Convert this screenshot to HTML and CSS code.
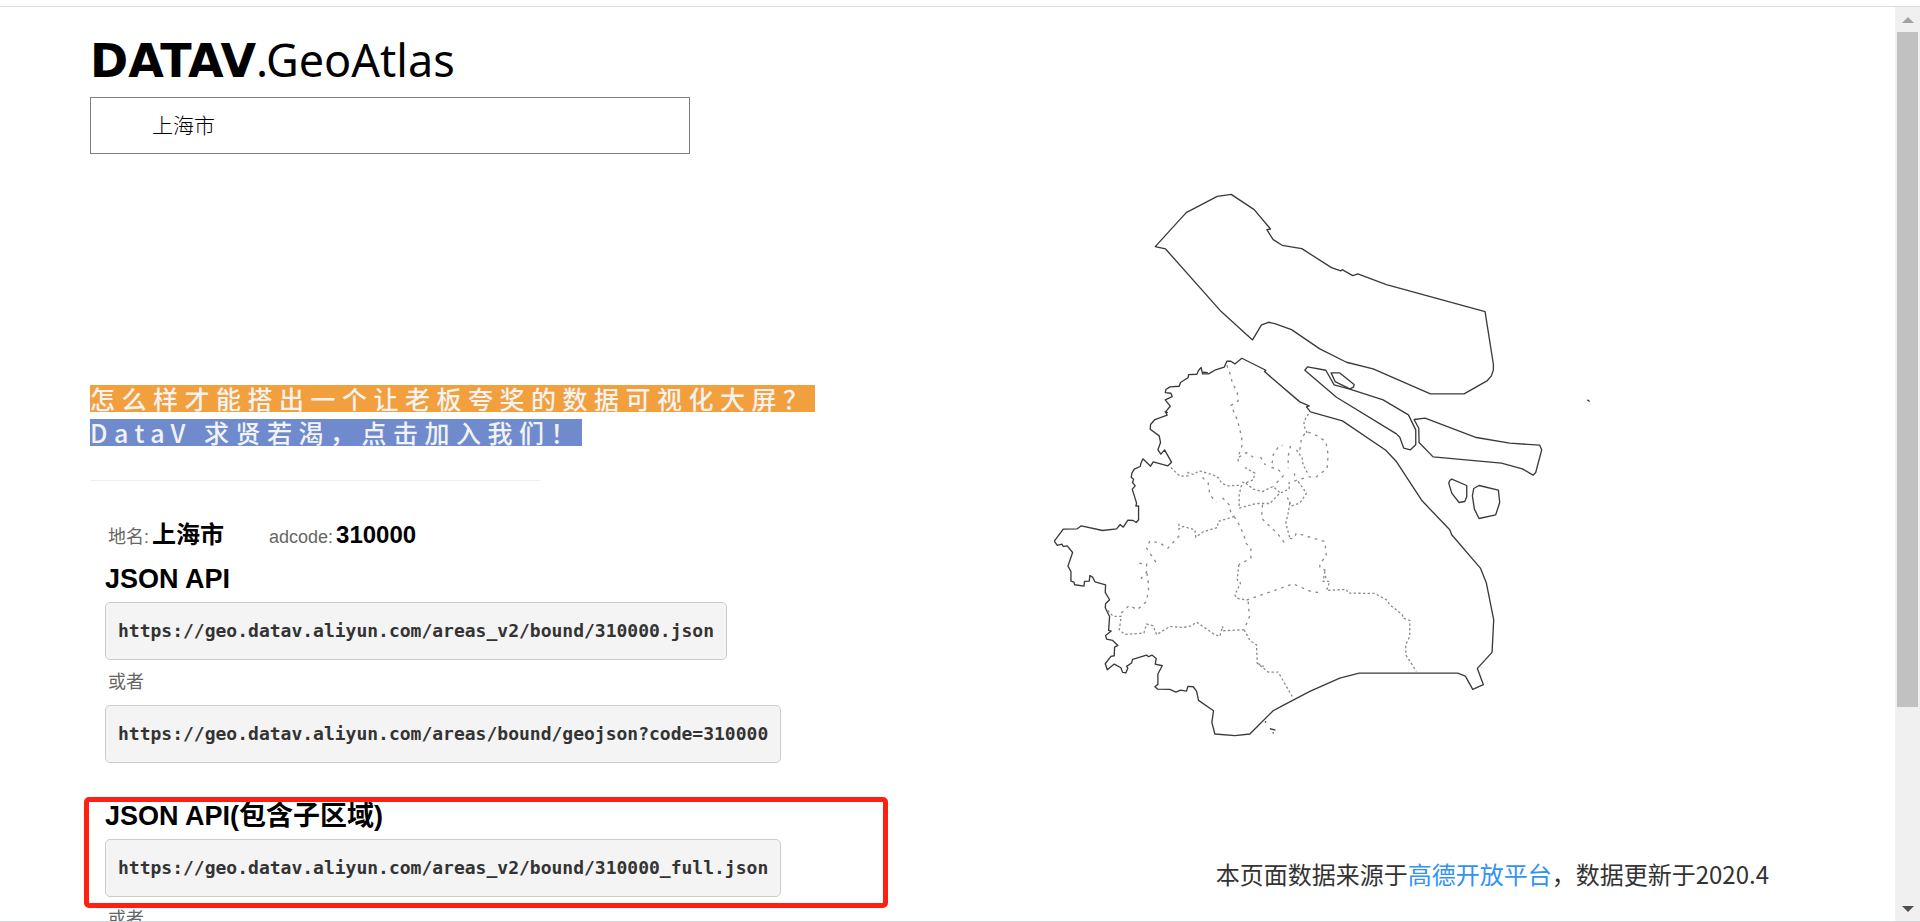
FILE: index.html
```html
<!DOCTYPE html>
<html lang="zh-CN">
<head>
<meta charset="utf-8">
<meta name="viewport" content="width=device-width, initial-scale=1">
<title>DATAV.GeoAtlas</title>
<link rel="stylesheet" href="styles.css">
</head>
<body>
<div class="window">
  <main class="page">
    <section class="panel">
      <h1 class="logo"><span class="logo-strong">DATAV</span><span class="logo-light">.GeoAtlas</span></h1>
      <input class="search" type="text" value="上海市" aria-label="地名">
      <div class="banner">
        <a class="banner-line banner-orange" href="#join">怎么样才能搭出一个让老板夸奖的数据可视化大屏？</a>
        <a class="banner-line banner-blue" href="#join">DataV 求贤若渴，点击加入我们！</a>
      </div>
      <hr class="divider">
      <div class="details">
        <p class="facts">
          <span class="fact">地名: <strong class="fact-value">上海市</strong></span>
          <span class="fact">adcode: <strong class="fact-value">310000</strong></span>
        </p>
        <section class="api">
          <h2 class="api-title">JSON API</h2>
          <pre class="url"><code>https://geo.datav.aliyun.com/areas_v2/bound/310000.json</code></pre>
          <p class="or">或者</p>
          <pre class="url"><code>https://geo.datav.aliyun.com/areas/bound/geojson?code=310000</code></pre>
        </section>
        <section class="api api-full">
          <h2 class="api-title">JSON API(包含子区域)</h2>
          <pre class="url"><code>https://geo.datav.aliyun.com/areas_v2/bound/310000_full.json</code></pre>
          <div class="highlight"></div>
        </section>
        <p class="or">或者</p>
      </div>
    </section>
    <section class="map-side">
      <svg class="map" viewBox="2844 540 2844 1710" role="img" aria-label="上海市">
        <g class="coast">
          <g transform="translate(3360 510)">
            <path d="M106 230L199 128 292 79 334 73 403 119 452 177 441 179 460 209 487 226 546 236 635 293 663 303 667 299 699 317 714 312 800 344 1096 425 1121 583 1121 600 1115 618 1103 632 1033 672 932 672 760 597 680 577 600 537 515 479 465 461 446 457 425 465 398 510 304 425 137 237Z"/>
          </g>
          <g transform="translate(3120 1020)">
            <path d="M43 604L70 568 112 567 124 558 188 572 230 567 241 554 250 562 264 541 280 542 289 548 296 540 296 498 288 499 290 490 277 448 286 438 278 428 281 418 274 412 276 400 283 388 301 380 303 370 309 357 332 379 340 366 384 378 395 367 374 330 363 343 354 330 362 308 358 288 331 268 332 254 345 239 382 226 377 216 391 199 376 180 397 170 393 160 376 158 378 149 390 141 418 139 422 128 445 113 446 104 471 103 476 92 484 83 488 102 506 102 525 91 553 82 561 64 573 64 585 72 606 55 678 91 674 95 780 186 808 198 800 201 812 216"/>
            <path d="M374 215L384 218M489 97L504 98"/>
          </g>
          <g transform="translate(3840 1050)">
            <path d="M92 186L188 213 318 301 349 334 427 453 510 540 516 555 602 655 620 700 642 810 637 908 593 956 611 1005 579 1019 557 979 534 970 238 970 180 985 90 1025 0 1072"/>
            <path d="M83 51L138 61 163 105 210 118 310 150 386 195 408 240 408 285 392 300 372 295 360 262 350 252 170 142 75 61Z"/>
            <path d="M154 69L180 69 223 104 221 112 210 117 166 95Z"/>
            <path d="M403 209L436 205 590 263 690 280 780 286 786 300 768 368 760 376 728 357 665 340 460 321 418 278 417 235Z"/>
            <path d="M516 388L561 407 561 441 555 455 538 458 516 430 507 400 510 392Z"/>
            <path d="M598 407L656 421 660 458 648 495 598 506 584 478 578 438 582 416Z"/>
            <path d="M923 150L930 155"/>
          </g>
          <g transform="translate(3120 1560)">
            <path d="M720 562L700 573 630 643 585 648 525 643 516 608 521 573 476 542 470 514 460 501 444 500 440 514 422 511 408 517 390 509 353 508 345 501 354 494 354 463 367 438 346 433 349 416 336 406 326 411 320 406 278 419 275 430 260 440 264 445 258 459 248 458 243 444 223 433 202 450 196 432 213 410 223 408 224 382 234 377 218 362 200 358 197 347 214 334 206 332 209 290 196 264 197 252 209 240 196 218 197 195 165 186 158 172 150 167 148 184 134 185 132 199 104 195 102 187 93 184 93 155 84 139 98 98 82 78 70 80 66 73 52 77 43 64"/>
            <path d="M675 606L679 608M690 627L707 631M698 640L702 639"/>
          </g>
        </g>
        <g class="district">
          <g transform="translate(3120 1020)">
            <path class="sparse" d="M561 76L573 108 577 130 592 155 595 183 573 197 583 218 594 245 605 290 607 315 595 350 595 375"/>
            <path d="M393 383L420 409 445 408 444 398 460 404 478 393 520 405 537 415 545 430 565 438 605 436"/>
            <path class="sparse" d="M488 413L505 430 510 465 530 487M548 474L568 495 572 515 583 530"/>
            <path d="M583 530L535 545 533 563 490 576 468 592 465 570 430 560 417 568 417 552"/>
            <path class="sparse" d="M418 588L384 625 360 610 330 603 320 625 350 670M298 671L320 672 320 697 303 717"/>
            <path d="M605 436L598 465 598 505 650 491 690 491 720 460 748 448 748 425"/>
            <path d="M615 383L645 400 640 420 615 430 605 425M618 430L640 448 668 455 700 440 720 458"/>
            <path class="sparse" d="M597 352L620 338 640 352M662 352L677 376M697 370L700 345 718 317 728 317M752 318L745 350 745 385M695 383L715 388 730 408 700 440"/>
            <path class="sparse" d="M780 330L785 295 800 275 830 287 858 305 865 345 862 385 830 411 805 411 765 423 764 400"/>
            <path d="M770 330L787 355 790 375 806 405M806 222L792 245 795 265 805 285"/>
            <path d="M775 425L800 460 780 490 755 498 740 468M750 490L745 520 738 550 750 595"/>
            <path class="sparse" d="M668 495L665 535 690 560 712 580 735 610M750 595L760 598 770 580 810 592 855 605 860 650 840 670 840 685 855 690 858 715"/>
            <path class="sparse" d="M583 530L598 555 612 585 618 610 633 625 633 655 597 675"/>
            <path d="M597 675L592 720 602 730 585 765 590 775 620 781"/>
          </g>
          <g transform="translate(3120 1560)">
            <path class="sparse" d="M620 241L690 217 760 192 810 214 845 220M625 245L629 290 613 330"/>
            <path d="M613 330L550 333 548 320 540 350 525 345 470 307 455 318 430 323 390 320 350 345 340 318 320 313 312 340 255 344 238 330 244 290 220 290 202 270"/>
            <path class="sparse" d="M244 280L268 257 292 270 320 245 327 200 320 155"/>
            <path d="M613 330L630 362 650 375 652 430 685 457 715 457 757 530M655 432L672 440"/>
          </g>
          <g transform="translate(3840 1620)">
            <path d="M135 95L130 125 150 125 140 152 200 149 205 160 285 161 320 180 330 195 368 225 370 235 390 242 390 290 378 315 378 345 410 395"/>
          </g>
        </g>
      </svg>
      <p class="source">本页面数据来源于<a class="source-link" href="#amap">高德开放平台</a>，数据更新于2020.4</p>
    </section>
  </main>
  <div class="scrollbar" aria-hidden="true">
    <svg class="arrow arrow-up" viewBox="0 0 12 6"><path d="M6 0L12 6H0Z"/></svg>
    <div class="track"><div class="thumb"></div></div>
    <svg class="arrow" viewBox="0 0 12 6"><path d="M0 0H12L6 6Z"/></svg>
  </div>
</div>
</body>
</html>
```
FILE: styles.css
```css
* {
  box-sizing: border-box;
}

body {
  margin: 0;
  background: #fff;
  color: #000;
  font-family: "Liberation Sans", "Noto Sans CJK SC", sans-serif;
}

h1, h2, p, pre {
  margin: 0;
}

.window {
  display: flex;
  height: 100vh;
  margin-top: 6px;
  max-height: calc(100vh - 6px);
  overflow: hidden;
  border-top: 1px solid #dcdcdc;
  border-bottom: 1px solid #cfd8e2;
}

.page {
  flex: 1;
  min-width: 0;
  display: grid;
  grid-template-columns: 1fr 1fr;
  overflow: hidden;
}

.panel {
  padding: 28px 0 0 90px;
}

.logo {
  display: flex;
  align-items: baseline;
  height: 50px;
  margin-bottom: 12px;
  font-family: "DejaVu Sans", sans-serif;
  font-size: 46px;
  line-height: 50px;
}

.logo-strong {
  font-weight: 700;
}

.logo-light {
  font-family: "Noto Sans", sans-serif;
  font-size: 45px;
  font-weight: 400;
}

.search {
  display: block;
  width: 600px;
  max-width: 100%;
  height: 57px;
  padding: 0 61px 3px;
  border: 1px solid #808080;
  background: #fff;
  color: #000;
  font-family: "Noto Sans CJK SC", sans-serif;
  font-size: 21px;
  font-weight: 300;
}

.banner {
  display: flex;
  flex-direction: column;
  align-items: flex-start;
  gap: 7px;
  margin-top: 231px;
}

.banner-line {
  color: #f2f2f2;
  font-family: "Noto Sans CJK SC", sans-serif;
  font-size: 25px;
  font-weight: 500;
  line-height: 27px;
  letter-spacing: 0.26em;
  white-space: nowrap;
  text-decoration: none;
}

.banner-orange {
  background: #f2a03d;
}

.banner-blue {
  background: #6f8bce;
}

.divider {
  width: 450px;
  height: 1px;
  margin: 34px 0 36px;
  border: 0;
  background: #eee;
}

.details {
  padding-left: 15px;
}

.facts {
  display: flex;
  align-items: baseline;
  gap: 45px;
  padding-left: 3px;
  color: #666;
  font-size: 18px;
  line-height: 36px;
}

.fact {
  display: flex;
  align-items: baseline;
  gap: 3px;
}

.fact-value {
  color: #000;
  font-size: 24px;
  line-height: 36px;
}

.api {
  margin-top: 8px;
}

.api-title {
  margin-bottom: 7px;
  font-size: 27px;
  line-height: 32px;
}

.url {
  width: fit-content;
  padding: 17px 12px;
  border: 1px solid #ccc;
  border-radius: 5px;
  background: #f4f4f4;
  color: #333;
  font-size: 18px;
  font-weight: 700;
  line-height: 22px;
}

.url code {
  font-family: "DejaVu Sans Mono", monospace;
}

.or {
  padding: 10px 3px 11px;
  color: #666;
  font-size: 18px;
  line-height: 24px;
}

.api-full {
  position: relative;
  margin-top: 37px;
}

.highlight {
  position: absolute;
  top: -3px;
  bottom: -11px;
  left: -21px;
  width: 804px;
  border: 5px solid #ff2012;
  border-radius: 5px;
}

.map-side {
  padding-top: 173px;
}

.map {
  display: block;
  width: 100%;
  fill: none;
}

.coast {
  stroke: #3a3a3a;
  stroke-width: 4;
  stroke-linejoin: round;
}

.district {
  stroke: #8c8c8c;
  stroke-width: 4;
  stroke-dasharray: 7 7;
}

.sparse {
  stroke-dasharray: 8 14;
}

.source {
  margin: 106px 126px 0 0;
  color: #333;
  font-family: "Noto Sans CJK SC", sans-serif;
  font-size: 24px;
  line-height: 36px;
  text-align: right;
}

.source-link {
  color: #3391f5;
  text-decoration: none;
}

.scrollbar {
  display: flex;
  flex-direction: column;
  align-items: center;
  width: 25px;
  padding: 10px 0 9px;
  background: #f0f0f0;
}

.arrow {
  width: 12px;
  height: 6px;
  fill: #505050;
}

.arrow-up {
  fill: #a3a3a3;
}

.track {
  flex: 1;
  width: 21px;
  margin: 9px 0;
}

.thumb {
  height: 78%;
  background: #c1c1c1;
}
```
